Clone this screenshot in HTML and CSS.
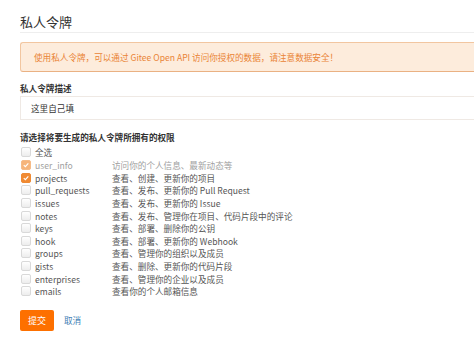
FILE: index.html
```html
<!DOCTYPE html>
<html lang="zh-CN">
<head>
    <meta charset="UTF-8">
    <title>私人令牌</title>
    <link rel="stylesheet" href="styles.css">
</head>
<body>
    <div class="page">
        <h1>私人令牌</h1>

        <div class="alert">使用私人令牌，可以通过 Gitee Open API 访问你授权的数据，请注意数据安全！</div>

        <label class="field-label">私人令牌描述</label>
        <div class="text-input">这里自己填</div>

        <div class="field-label scopes-title">请选择将要生成的私人令牌所拥有的权限</div>

        <div class="scopes">
            <div class="scope">
                <span class="check"></span>
                <span class="name cn">全选</span>
            </div>
            <div class="scope disabled">
                <span class="check checked"><svg viewBox="0 0 10 10"><path d="M2.2 5.2 L4.2 7.1 L7.9 2.9"/></svg></span>
                <span class="name">user_info</span>
                <span class="desc">访问你的个人信息、最新动态等</span>
            </div>
            <div class="scope">
                <span class="check checked"><svg viewBox="0 0 10 10"><path d="M2.2 5.2 L4.2 7.1 L7.9 2.9"/></svg></span>
                <span class="name">projects</span>
                <span class="desc">查看、创建、更新你的项目</span>
            </div>
            <div class="scope">
                <span class="check"></span>
                <span class="name">pull_requests</span>
                <span class="desc">查看、发布、更新你的 Pull Request</span>
            </div>
            <div class="scope">
                <span class="check"></span>
                <span class="name">issues</span>
                <span class="desc">查看、发布、更新你的 Issue</span>
            </div>
            <div class="scope">
                <span class="check"></span>
                <span class="name">notes</span>
                <span class="desc">查看、发布、管理你在项目、代码片段中的评论</span>
            </div>
            <div class="scope">
                <span class="check"></span>
                <span class="name">keys</span>
                <span class="desc">查看、部署、删除你的公钥</span>
            </div>
            <div class="scope">
                <span class="check"></span>
                <span class="name">hook</span>
                <span class="desc">查看、部署、更新你的 Webhook</span>
            </div>
            <div class="scope">
                <span class="check"></span>
                <span class="name">groups</span>
                <span class="desc">查看、管理你的组织以及成员</span>
            </div>
            <div class="scope">
                <span class="check"></span>
                <span class="name">gists</span>
                <span class="desc">查看、删除、更新你的代码片段</span>
            </div>
            <div class="scope">
                <span class="check"></span>
                <span class="name">enterprises</span>
                <span class="desc">查看、管理你的企业以及成员</span>
            </div>
            <div class="scope">
                <span class="check"></span>
                <span class="name">emails</span>
                <span class="desc">查看你的个人邮箱信息</span>
            </div>
        </div>

        <div class="actions">
            <button class="submit-btn">提交</button>
            <a class="cancel-link" href="#">取消</a>
        </div>
    </div>
</body>
</html>
```

FILE: styles.css
```css
* {
    box-sizing: border-box;
    margin: 0;
    padding: 0;
}

body {
    background-color: #fff;
    color: #333;
    font-family: "Noto Sans CJK SC", "Liberation Sans", sans-serif;
    font-size: 8.6px;
    overflow: hidden;
}

.page {
    padding-left: 20px;
}

h1 {
    font-size: 13px;
    font-weight: normal;
    line-height: 16px;
    color: #333;
    padding-top: 14px;
    padding-bottom: 2px;
    border-bottom: 1px solid #eee;
}

.alert {
    margin-top: 9px;
    padding: 8px 13px;
    line-height: 12px;
    background-color: #fdecdc;
    border: 1px solid #f2c6a0;
    border-right: none;
    border-bottom-color: #eab183;
    border-radius: 3px 0 0 3px;
    color: #ea8437;
}

.field-label {
    display: block;
    margin-top: 10px;
    line-height: 12px;
    font-weight: bold;
    color: #333;
}

.text-input {
    margin-top: 2px;
    height: 24px;
    line-height: 22px;
    padding-left: 10px;
    border: 1px solid #efe9e4;
    border-right: none;
    color: #333;
}

.scopes-title {
    margin-top: 11px;
}

.scopes {
    margin-top: 3px;
}

.scope {
    display: flex;
    align-items: center;
    height: 12.65px;
    color: #555;
}

.check {
    width: 10px;
    height: 10px;
    margin-left: 1px;
    margin-right: 4px;
    border: 1px solid #d9d9d9;
    border-radius: 2px;
    background: linear-gradient(#fff, #ededed);
    display: flex;
}

.check.checked {
    border-color: #ee8a34;
    background: #f18a32;
}

.check svg {
    width: 100%;
    height: 100%;
}

.check path {
    fill: none;
    stroke: #fff;
    stroke-width: 1.4;
}

.name {
    width: 77px;
    color: #555;
}

.desc {
    color: #555;
}

.disabled .check.checked {
    border-color: #f5bb88;
    background: #f6b47a;
}

.disabled .name,
.disabled .desc {
    color: #a0a0a0;
}

.actions {
    margin-top: 12px;
    display: flex;
    align-items: center;
    gap: 10px;
}

.submit-btn {
    width: 34px;
    height: 21px;
    border: none;
    border-radius: 2px;
    background-color: #fd7000;
    color: #fff;
    font-family: inherit;
    font-size: 9px;
}

.cancel-link {
    color: #3f7fb5;
    text-decoration: none;
}
```
